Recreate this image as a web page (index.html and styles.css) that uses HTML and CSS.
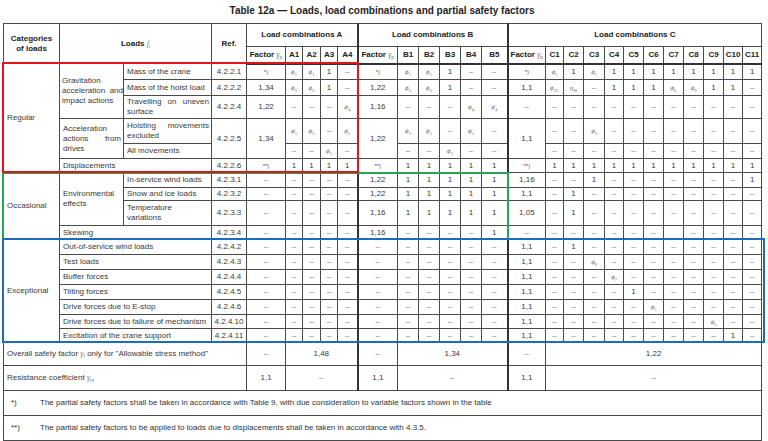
FILE: index.html
```html
<!DOCTYPE html>
<html lang="en">
<head>
<meta charset="utf-8">
<title>Table 12a</title>
<link rel="stylesheet" href="styles.css">
</head>
<body>
<div class="page">
  <h1 class="title">Table 12a — Loads, load combinations and partial safety factors</h1>
  <table class="loads">
    <colgroup>
      <col style="width:56px"><col style="width:64px"><col style="width:88px"><col style="width:35px">
      <col style="width:39px"><col style="width:17px"><col style="width:18px"><col style="width:17px"><col style="width:20px">
      <col class="sep" style="width:40px"><col style="width:21px"><col style="width:21px"><col style="width:21px"><col style="width:21px"><col style="width:26px">
      <col class="sep" style="width:38px"><col style="width:18px"><col style="width:20px"><col style="width:21px"><col style="width:19px"><col style="width:20px"><col style="width:20px"><col style="width:20px"><col style="width:20px"><col style="width:20px"><col style="width:19px"><col style="width:19px">
    </colgroup>
    <thead>
      <tr class="hh1">
        <th rowspan="2">Categories<br>of loads</th>
        <th rowspan="2" colspan="2">Loads <i class="sym">f</i><sub class="ss">i</sub></th>
        <th rowspan="2">Ref.</th>
        <th colspan="5">Load combinations A</th>
        <th colspan="6">Load combinations B</th>
        <th colspan="12">Load combinations C</th>
      </tr>
      <tr class="hh2">
        <th class="fac">Factor <i class="sym">γ</i><sub class="ss">p</sub></th><th>A1</th><th>A2</th><th>A3</th><th>A4</th>
        <th class="fac">Factor <i class="sym">γ</i><sub class="ss">p</sub></th><th>B1</th><th>B2</th><th>B3</th><th>B4</th><th>B5</th>
        <th class="fac">Factor <i class="sym">γ</i><sub class="ss">p</sub></th><th>C1</th><th>C2</th><th>C3</th><th>C4</th><th>C5</th><th>C6</th><th>C7</th><th>C8</th><th>C9</th><th>C10</th><th>C11</th>
      </tr>
    </thead>
    <tbody>
      <tr class="h16">
        <td rowspan="6" class="cat">Regular</td>
        <td rowspan="3" class="j tight">Gravitation acceleration and impact actions</td>
        <td class="lt">Mass of the crane</td>
        <td>4.2.2.1</td>
        <td class="sm">*)</td>
        <td><span class="ph">ϕ<sub>1</sub></span></td><td><span class="ph">ϕ<sub>1</sub></span></td><td>1</td><td class="d">–</td>
        <td class="sm">*)</td>
        <td><span class="ph">ϕ<sub>1</sub></span></td><td><span class="ph">ϕ<sub>1</sub></span></td><td>1</td><td class="d">–</td><td class="d">–</td>
        <td class="sm">*)</td>
        <td><span class="ph">ϕ<sub>1</sub></span></td><td>1</td><td><span class="ph">ϕ<sub>1</sub></span></td><td>1</td><td>1</td><td>1</td><td>1</td><td>1</td><td>1</td><td>1</td><td>1</td>
      </tr>
      <tr class="h16">
        <td class="lt">Mass of the hoist load</td>
        <td>4.2.2.2</td>
        <td>1,34</td>
        <td><span class="ph">ϕ<sub>2</sub></span></td><td><span class="ph">ϕ<sub>3</sub></span></td><td>1</td><td class="d">–</td>
        <td>1,22</td>
        <td><span class="ph">ϕ<sub>2</sub></span></td><td><span class="ph">ϕ<sub>3</sub></span></td><td>1</td><td class="d">–</td><td class="d">–</td>
        <td>1,1</td>
        <td><span class="ph">ϕ<sub>2C</sub></span></td><td><span class="ph">η<sub>W</sub></span></td><td class="d">–</td><td>1</td><td>1</td><td>1</td><td><span class="ph">ϕ<sub>L</sub></span></td><td><span class="ph">ϕ<sub>9</sub></span></td><td>1</td><td>1</td><td class="d">–</td>
      </tr>
      <tr class="h23">
        <td class="j">Travelling on uneven surface</td>
        <td>4.2.2.4</td>
        <td>1,22</td>
        <td class="d">–</td><td class="d">–</td><td class="d">–</td><td><span class="ph">ϕ<sub>4</sub></span></td>
        <td>1,16</td>
        <td class="d">–</td><td class="d">–</td><td class="d">–</td><td><span class="ph">ϕ<sub>4</sub></span></td><td><span class="ph">ϕ<sub>4</sub></span></td>
        <td class="d">–</td>
        <td class="d">–</td><td class="d">–</td><td class="d">–</td><td class="d">–</td><td class="d">–</td><td class="d">–</td><td class="d">–</td><td class="d">–</td><td class="d">–</td><td class="d">–</td><td class="d">–</td>
      </tr>
      <tr class="h25">
        <td rowspan="2" class="j">Acceleration actions from drives</td>
        <td class="j">Hoisting movements excluded</td>
        <td rowspan="2">4.2.2.5</td>
        <td rowspan="2">1,34</td>
        <td><span class="ph">ϕ<sub>5</sub></span></td><td><span class="ph">ϕ<sub>5</sub></span></td><td class="d">–</td><td><span class="ph">ϕ<sub>5</sub></span></td>
        <td rowspan="2">1,22</td>
        <td><span class="ph">ϕ<sub>5</sub></span></td><td><span class="ph">ϕ<sub>5</sub></span></td><td class="d">–</td><td><span class="ph">ϕ<sub>5</sub></span></td><td class="d">–</td>
        <td rowspan="2">1,1</td>
        <td class="d">–</td><td class="d">–</td><td><span class="ph">ϕ<sub>5</sub></span></td><td class="d">–</td><td class="d">–</td><td class="d">–</td><td class="d">–</td><td class="d">–</td><td class="d">–</td><td class="d">–</td><td class="d">–</td>
      </tr>
      <tr class="h15">
        <td class="lt">All movements</td>
        <td class="d">–</td><td class="d">–</td><td><span class="ph">ϕ<sub>5</sub></span></td><td class="d">–</td>
        <td class="d">–</td><td class="d">–</td><td><span class="ph">ϕ<sub>5</sub></span></td><td class="d">–</td><td class="d">–</td>
        <td class="d">–</td><td class="d">–</td><td class="d">–</td><td class="d">–</td><td class="d">–</td><td class="d">–</td><td class="d">–</td><td class="d">–</td><td class="d">–</td><td class="d">–</td><td class="d">–</td>
      </tr>
      <tr class="h14">
        <td colspan="2" class="lt">Displacements</td>
        <td>4.2.2.6</td>
        <td class="sm">**)</td>
        <td>1</td><td>1</td><td>1</td><td>1</td>
        <td class="sm">**)</td>
        <td>1</td><td>1</td><td>1</td><td>1</td><td>1</td>
        <td class="sm">**)</td>
        <td>1</td><td>1</td><td>1</td><td>1</td><td>1</td><td>1</td><td>1</td><td>1</td><td>1</td><td>1</td><td>1</td>
      </tr>
      <tr class="h15">
        <td rowspan="4" class="cat">Occasional</td>
        <td rowspan="3" class="lt">Environmental effects</td>
        <td class="lt">In-service wind loads</td>
        <td>4.2.3.1</td>
        <td class="d">–</td>
        <td class="d">–</td><td class="d">–</td><td class="d">–</td><td class="d">–</td>
        <td>1,22</td>
        <td>1</td><td>1</td><td>1</td><td>1</td><td>1</td>
        <td>1,16</td>
        <td class="d">–</td><td class="d">–</td><td>1</td><td class="d">–</td><td class="d">–</td><td class="d">–</td><td class="d">–</td><td class="d">–</td><td class="d">–</td><td class="d">–</td><td>1</td>
      </tr>
      <tr class="h13">
        <td class="lt">Snow and ice loads</td>
        <td>4.2.3.2</td>
        <td class="d">–</td>
        <td class="d">–</td><td class="d">–</td><td class="d">–</td><td class="d">–</td>
        <td>1,22</td>
        <td>1</td><td>1</td><td>1</td><td>1</td><td>1</td>
        <td>1,1</td>
        <td class="d">–</td><td>1</td><td class="d">–</td><td class="d">–</td><td class="d">–</td><td class="d">–</td><td class="d">–</td><td class="d">–</td><td class="d">–</td><td class="d">–</td><td class="d">–</td>
      </tr>
      <tr class="h25">
        <td class="lt">Temperature<br>variations</td>
        <td>4.2.3.3</td>
        <td class="d">–</td>
        <td class="d">–</td><td class="d">–</td><td class="d">–</td><td class="d">–</td>
        <td>1,16</td>
        <td>1</td><td>1</td><td>1</td><td>1</td><td>1</td>
        <td>1,05</td>
        <td class="d">–</td><td>1</td><td class="d">–</td><td class="d">–</td><td class="d">–</td><td class="d">–</td><td class="d">–</td><td class="d">–</td><td class="d">–</td><td class="d">–</td><td class="d">–</td>
      </tr>
      <tr class="h14">
        <td colspan="2" class="lt">Skewing</td>
        <td>4.2.3.4</td>
        <td class="d">–</td>
        <td class="d">–</td><td class="d">–</td><td class="d">–</td><td class="d">–</td>
        <td>1,16</td>
        <td class="d">–</td><td class="d">–</td><td class="d">–</td><td class="d">–</td><td>1</td>
        <td class="d">–</td>
        <td class="d">–</td><td class="d">–</td><td class="d">–</td><td class="d">–</td><td class="d">–</td><td class="d">–</td><td></td><td class="d">–</td><td class="d">–</td><td class="d">–</td><td class="d">–</td>
      </tr>
      <tr class="h15">
        <td rowspan="7" class="cat">Exceptional</td>
        <td colspan="2" class="lt">Out-of-service wind loads</td>
        <td>4.2.4.2</td>
        <td class="d">–</td>
        <td class="d">–</td><td class="d">–</td><td class="d">–</td><td class="d">–</td>
        <td class="d">–</td>
        <td class="d">–</td><td class="d">–</td><td class="d">–</td><td class="d">–</td><td class="d">–</td>
        <td>1,1</td>
        <td class="d">–</td><td>1</td><td class="d">–</td><td class="d">–</td><td class="d">–</td><td class="d">–</td><td class="d">–</td><td class="d">–</td><td class="d">–</td><td class="d">–</td><td class="d">–</td>
      </tr>
      <tr class="h15">
        <td colspan="2" class="lt">Test loads</td>
        <td>4.2.4.3</td>
        <td class="d">–</td>
        <td class="d">–</td><td class="d">–</td><td class="d">–</td><td class="d">–</td>
        <td class="d">–</td>
        <td class="d">–</td><td class="d">–</td><td class="d">–</td><td class="d">–</td><td class="d">–</td>
        <td>1,1</td>
        <td class="d">–</td><td class="d">–</td><td><span class="ph">ϕ<sub>6</sub></span></td><td class="d">–</td><td class="d">–</td><td class="d">–</td><td class="d">–</td><td class="d">–</td><td class="d">–</td><td class="d">–</td><td class="d">–</td>
      </tr>
      <tr class="h15">
        <td colspan="2" class="lt">Buffer forces</td>
        <td>4.2.4.4</td>
        <td class="d">–</td>
        <td class="d">–</td><td class="d">–</td><td class="d">–</td><td class="d">–</td>
        <td class="d">–</td>
        <td class="d">–</td><td class="d">–</td><td class="d">–</td><td class="d">–</td><td class="d">–</td>
        <td>1,1</td>
        <td class="d">–</td><td class="d">–</td><td class="d">–</td><td><span class="ph">ϕ<sub>7</sub></span></td><td class="d">–</td><td class="d">–</td><td class="d">–</td><td class="d">–</td><td class="d">–</td><td class="d">–</td><td class="d">–</td>
      </tr>
      <tr class="h15">
        <td colspan="2" class="lt">Tilting forces</td>
        <td>4.2.4.5</td>
        <td class="d">–</td>
        <td class="d">–</td><td class="d">–</td><td class="d">–</td><td class="d">–</td>
        <td class="d">–</td>
        <td class="d">–</td><td class="d">–</td><td class="d">–</td><td class="d">–</td><td class="d">–</td>
        <td>1,1</td>
        <td class="d">–</td><td class="d">–</td><td class="d">–</td><td class="d">–</td><td>1</td><td class="d">–</td><td class="d">–</td><td class="d">–</td><td class="d">–</td><td class="d">–</td><td class="d">–</td>
      </tr>
      <tr class="h15">
        <td colspan="2" class="lt">Drive forces due to E-stop</td>
        <td>4.2.4.6</td>
        <td class="d">–</td>
        <td class="d">–</td><td class="d">–</td><td class="d">–</td><td class="d">–</td>
        <td class="d">–</td>
        <td class="d">–</td><td class="d">–</td><td class="d">–</td><td class="d">–</td><td class="d">–</td>
        <td>1,1</td>
        <td class="d">–</td><td class="d">–</td><td class="d">–</td><td class="d">–</td><td class="d">–</td><td><span class="ph">ϕ<sub>5</sub></span></td><td class="d">–</td><td class="d">–</td><td class="d">–</td><td class="d">–</td><td class="d">–</td>
      </tr>
      <tr class="h14">
        <td colspan="2" class="lt">Drive forces due to failure of mechanism</td>
        <td>4.2.4.10</td>
        <td class="d">–</td>
        <td class="d">–</td><td class="d">–</td><td class="d">–</td><td class="d">–</td>
        <td class="d">–</td>
        <td class="d">–</td><td class="d">–</td><td class="d">–</td><td class="d">–</td><td class="d">–</td>
        <td>1,1</td>
        <td class="d">–</td><td class="d">–</td><td class="d">–</td><td class="d">–</td><td class="d">–</td><td class="d">–</td><td class="d">–</td><td class="d">–</td><td><span class="ph">ϕ<sub>5</sub></span></td><td class="d">–</td><td class="d">–</td>
      </tr>
      <tr class="h14">
        <td colspan="2" class="lt">Excitation of the crane support</td>
        <td>4.2.4.11</td>
        <td class="d">–</td>
        <td class="d">–</td><td class="d">–</td><td class="d">–</td><td class="d">–</td>
        <td class="d">–</td>
        <td class="d">–</td><td class="d">–</td><td class="d">–</td><td class="d">–</td><td class="d">–</td>
        <td>1,1</td>
        <td class="d">–</td><td class="d">–</td><td class="d">–</td><td class="d">–</td><td class="d">–</td><td class="d">–</td><td class="d">–</td><td class="d">–</td><td class="d">–</td><td>1</td><td class="d">–</td>
      </tr>
      <tr class="h23 sum">
        <td colspan="4" class="lt">Overall safety factor <i class="sym">γ</i><sub class="ss">f</sub> only for "Allowable stress method"</td>
        <td class="d">–</td>
        <td colspan="4">1,48</td>
        <td class="d">–</td>
        <td colspan="5">1,34</td>
        <td class="d">–</td>
        <td colspan="11">1,22</td>
      </tr>
      <tr class="h25">
        <td colspan="4" class="lt">Resistance coefficient <i class="sym">γ</i><sub class="ss">m</sub></td>
        <td>1,1</td>
        <td colspan="4" class="d">–</td>
        <td>1,1</td>
        <td colspan="5" class="d">–</td>
        <td>1,1</td>
        <td colspan="11" class="d">–</td>
      </tr>
      <tr class="h25">
        <td colspan="27" class="note"><span class="mark">*)</span>The partial safety factors shall be taken in accordance with Table 9, with due consideration to variable factors shown in the table</td>
      </tr>
      <tr class="h25">
        <td colspan="27" class="note"><span class="mark">**)</span>The partial safety factors to be applied to loads due to displacements shall be taken in accordance with 4.3.5.</td>
      </tr>
    </tbody>
  </table>
  <div class="box box-green"></div>
  <div class="box box-red"></div>
  <div class="box box-blue"></div>
</div>
</body>
</html>
```

FILE: styles.css
```css
* { box-sizing: border-box; }
html, body { margin: 0; padding: 0; background: #fff; }
body {
  font-family: "Liberation Sans", Arial, sans-serif;
  color: #3a3a3a;
}
.page {
  position: relative;
  width: 768px;
  height: 441px;
  padding-left: 3px;
  overflow: hidden;
}
.title {
  margin: 0;
  width: 758px;
  height: 23px;
  line-height: 22px;
  text-align: center;
  font-size: 10px;
  font-weight: bold;
  color: #1e1e1e;
}
table.loads {
  border-collapse: collapse;
  table-layout: fixed;
  width: 758px;
  font-size: 8px;
  border: 1.5px solid #3a3a3a;
}
.loads th, .loads td {
  border: 1px solid #4a4a4a;
  padding: 0 1px;
  text-align: center;
  vertical-align: middle;
  line-height: 10px;
  overflow: hidden;
  white-space: normal;
}
.loads th {
  font-weight: bold;
  color: #222;
}
.loads col.sep { border-left: 2px solid #333; }
.loads thead tr.hh2 th { border-bottom: 2px solid #333; }
.hh1 { height: 23px; }
.hh2 { height: 17px; }
.h13 { height: 13px; }
.h14 { height: 14px; }
.h15 { height: 15px; }
.h16 { height: 16px; }
.h23 { height: 23px; }
.h25 { height: 25px; }
.loads td.lt { text-align: left; padding: 0 2px 0 3px; }
.loads td.cat { text-align: left; padding-left: 3px; }
.loads td.j {
  text-align: justify;
  text-align-last: left;
  padding: 0 2px 0 3px;
}
.loads td.j.tight { padding: 0 0 0 2px; }
.loads td.d { color: #777; }
.loads td.sm { font-size: 6px; color: #555; }
.fac { white-space: nowrap; }
.sym { font-family: "Liberation Serif", serif; font-style: italic; font-weight: normal; font-size: 8px; color: #777; }
.ss { font-size: 5px; font-weight: normal; color: #777; vertical-align: -2px; line-height: 0; }
.ph {
  font-family: "Liberation Serif", "DejaVu Serif", serif;
  font-style: italic;
  font-size: 7px;
  color: #666;
}
.ph sub { font-size: 4.5px; font-style: normal; vertical-align: -2px; line-height: 0; }
.loads td.note { text-align: left; padding-left: 7px; color: #333; }
.mark { display: inline-block; width: 29px; }
.box { position: absolute; border-style: solid; border-width: 2px; pointer-events: none; }
.box-red { left: 2px; top: 62px; width: 357px; height: 111px; border-color: #e5141c; }
.box-green { left: 2px; top: 172px; width: 507px; height: 68px; border-color: #23a553; }
.box-blue { left: 2px; top: 238px; width: 763px; height: 105px; border-color: #1c6cbc; }
```
